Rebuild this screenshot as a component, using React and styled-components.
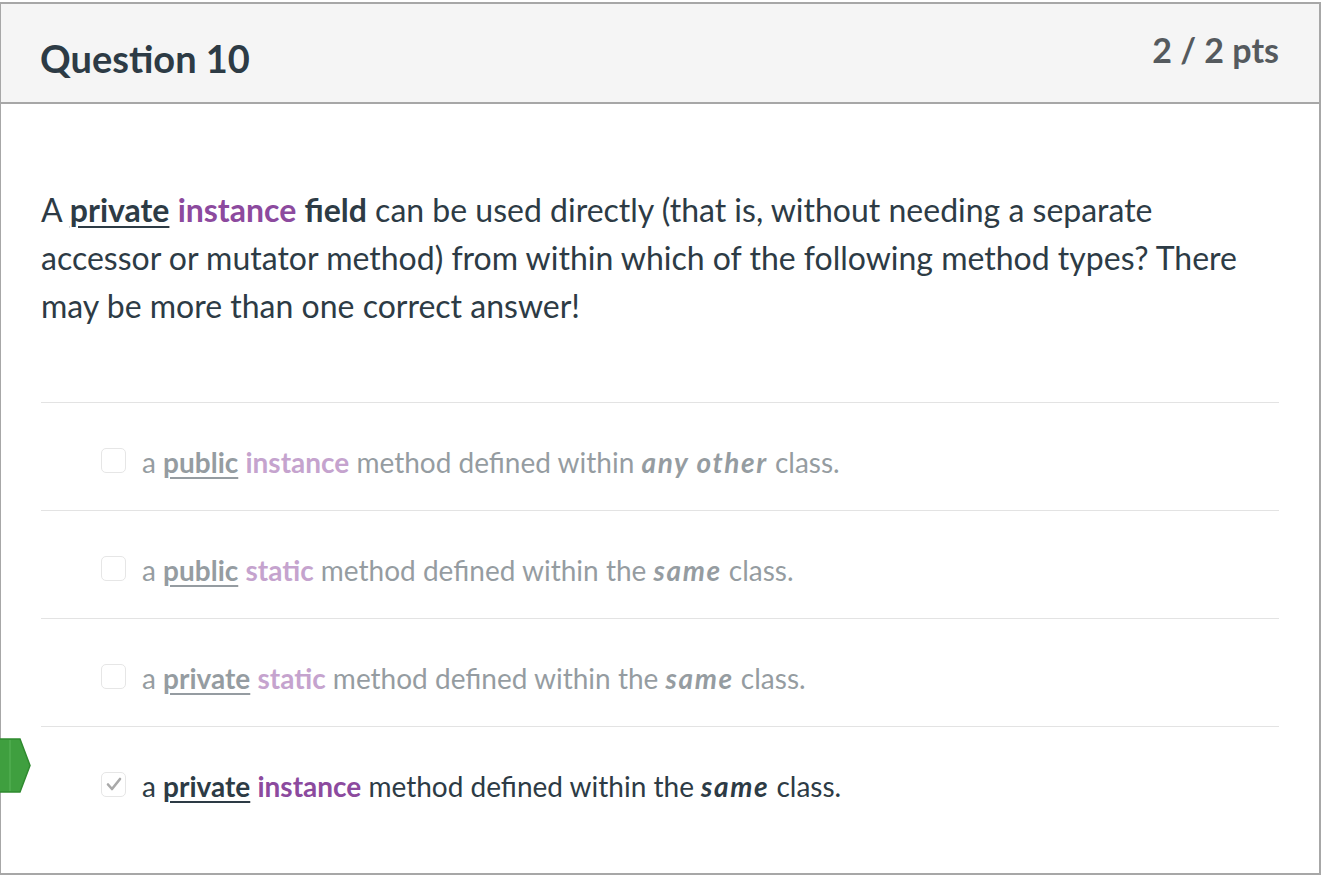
import styled, { createGlobalStyle } from "styled-components";

const GlobalStyle = createGlobalStyle`
  html, body {
    margin: 0;
    padding: 0;
    background: #ffffff;
    font-family: Lato, "Open Sans", "Liberation Sans", sans-serif;
  }
`;

const Page = styled.div`
  padding-top: 2px;
  width: 1324px;
`;

const Card = styled.div`
  width: 1321px;
  box-sizing: border-box;
  border: 2px solid #a7a7a7;
  border-left-width: 1px;
  background: #ffffff;
`;

const Header = styled.div`
  height: 100px;
  box-sizing: border-box;
  display: flex;
  justify-content: space-between;
  align-items: flex-start;
  padding: 26px 40px 0 39px;
  background: #f5f5f5;
  border-bottom: 2px solid #a7a7a7;
`;

const Title = styled.h2`
  margin: 6px 0 0;
  font-size: 38px;
  line-height: 44px;
  font-weight: 700;
  color: #2d3b45;
`;

const Points = styled.div`
  font-size: 34px;
  line-height: 40px;
  font-weight: 700;
  color: #555a5e;
`;

const Body = styled.div`
  padding: 82px 40px 39px 40px;
`;

const QuestionText = styled.p`
  margin: 0 0 72px;
  font-size: 32px;
  line-height: 48px;
  color: #2d3b45;
`;

const Strong = styled.strong`
  font-weight: 700;
  color: ${({ $purple }) => ($purple ? "#8c4a9e" : "inherit")};
  text-decoration: ${({ $under }) => ($under ? "underline" : "none")};
  text-underline-offset: 4px;
  text-decoration-thickness: 2px;
`;

const Emph = styled.em`
  font-weight: 700;
  font-style: italic;
  letter-spacing: 1.6px;
`;

const Answers = styled.div`
  display: flex;
  flex-direction: column;
`;

const Answer = styled.label`
  position: relative;
  height: 96px;
  border-top: 1px solid #e3e3e3;
  display: flex;
  align-items: center;
  gap: 16px;
  padding: 11px 0 0 60px;
`;

const Box = styled.span`
  width: 23px;
  height: 23px;
  flex: none;
  margin-top: -4px;
  border: 1px solid #e6e6e6;
  border-radius: 5px;
  background: #ffffff;
  display: flex;
  align-items: center;
  justify-content: center;
`;

const AnswerText = styled.span`
  font-size: 28px;
  line-height: 36px;
  color: #2d3b45;
  opacity: ${({ $muted }) => ($muted ? 0.5 : 1)};
`;

const Marker = styled.svg`
  position: absolute;
  left: -42px;
  top: 11px;
`;

const answers = [
  { scope: "public", kind: "instance", where: "any other", checked: false },
  { scope: "public", kind: "static", where: "the same", checked: false },
  { scope: "private", kind: "static", where: "the same", checked: false },
  { scope: "private", kind: "instance", where: "the same", checked: true },
];

export default function App() {
  return (
    <Page>
      <GlobalStyle />
      <Card>
        <Header>
          <Title>Question 10</Title>
          <Points>2 / 2 pts</Points>
        </Header>
        <Body>
          <QuestionText>
            A <Strong $under>private</Strong> <Strong $purple>instance</Strong>{" "}
            <Strong>field</Strong> can be used directly (that is, without
            needing a separate accessor or mutator method) from within which of
            the following method types? There may be more than one correct
            answer!
          </QuestionText>
          <Answers>
            {answers.map((a, i) => {
              const words = a.where.split(" ");
              const lead = words[0] === "the" ? "the " : "";
              const em = words[0] === "the" ? words.slice(1).join(" ") : a.where;
              return (
                <Answer key={i}>
                  {a.checked && (
                    <Marker width="32" height="55" viewBox="0 0 32 55">
                      <path
                        d="M0 1h21l10 26.5-10 26.5H0z"
                        fill="#3f9f3f"
                        stroke="#2f8a2f"
                        strokeWidth="1.5"
                      />
                      <path d="M11 2v51" stroke="#5bb55b" strokeWidth="1" />
                    </Marker>
                  )}
                  <Box>
                    {a.checked && (
                      <svg width="18" height="18" viewBox="0 0 18 18">
                        <path
                          d="M3 9.5l4 4.5 8-10"
                          fill="none"
                          stroke="#a9a9a9"
                          strokeWidth="2.6"
                          strokeLinecap="round"
                          strokeLinejoin="round"
                        />
                      </svg>
                    )}
                  </Box>
                  <AnswerText $muted={!a.checked}>
                    a <Strong $under>{a.scope}</Strong>{" "}
                    <Strong $purple>{a.kind}</Strong> method defined within{" "}
                    {lead}
                    <Emph>{em}</Emph> class.
                  </AnswerText>
                </Answer>
              );
            })}
          </Answers>
        </Body>
      </Card>
    </Page>
  );
}
